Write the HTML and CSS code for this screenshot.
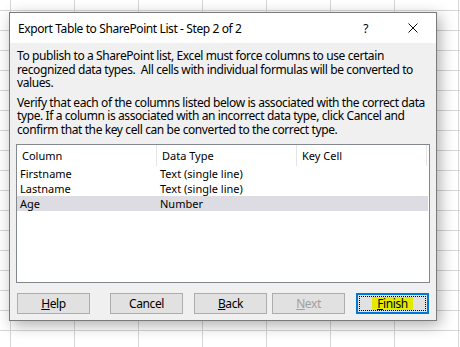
FILE: index.html
```html
<!DOCTYPE html>
<html lang="en">
<head>
  <meta charset="UTF-8" />
  <title>Export Table to SharePoint List</title>
  <link rel="stylesheet" href="styles.css">
</head>
<body>
  <div class="dialog">
    <div class="titlebar">
      <span class="title">Export Table to SharePoint List - Step 2 of 2</span>
      <span class="help-q">?</span>
      <svg class="close-x" width="10" height="10" viewBox="0 0 10 10">
        <path d="M0.5 0.5 L9.5 9.5 M9.5 0.5 L0.5 9.5" stroke="#111" stroke-width="1" fill="none" />
      </svg>
    </div>
    <div class="content">
      <p class="msg">To publish to a SharePoint list, Excel must force columns to use certain recognized data types.&nbsp; All cells with individual formulas will be converted to values.</p>
      <p class="msg">Verify that each of the columns listed below is associated with the correct data type. If a column is associated with an incorrect data type, click Cancel and confirm that the key cell can be converted to the correct type.</p>
      <div class="listview">
        <div class="lv-head">
          <div class="col c1">Column</div>
          <div class="col c2">Data Type</div>
          <div class="col c3">Key Cell</div>
        </div>
        <div class="lv-row">
          <div class="cell c1">Firstname</div>
          <div class="cell c2">Text (single line)</div>
          <div class="cell c3"></div>
        </div>
        <div class="lv-row">
          <div class="cell c1">Lastname</div>
          <div class="cell c2">Text (single line)</div>
          <div class="cell c3"></div>
        </div>
        <div class="lv-row selected">
          <div class="cell c1">Age</div>
          <div class="cell c2">Number</div>
          <div class="cell c3"></div>
        </div>
      </div>
      <div class="buttons">
        <button class="btn b-help"><u>H</u>elp</button>
        <button class="btn b-cancel">Cancel</button>
        <button class="btn b-back"><u>B</u>ack</button>
        <button class="btn b-next" disabled><u>N</u>ext</button>
        <button class="btn b-finish"><span class="focus"><span class="mark"><u>F</u>inish</span></span></button>
      </div>
    </div>
  </div>
</body>
</html>
```
FILE: styles.css
```css
html, body {
  margin: 0; padding: 0; height: 100%; overflow: hidden;
  font-family: 'Noto Sans', sans-serif; font-size: 12px; color: #000;
}
body {
  background-color: #fff;
  background-image:
    linear-gradient(to right, #d6d6d6 1px, transparent 1px),
    linear-gradient(to bottom, #d6d6d6 1px, transparent 1px);
  background-size: 64px 20px;
  background-position: 10px 10px;
  padding-top: 12px; box-sizing: border-box;
}
.dialog {
  margin-left: 9px; width: 426px; height: 307px;
  border: 1px solid #7a7a7a; background: #f0f0f0;
  box-shadow: 3px 4px 14px rgba(0,0,0,0.32);
  display: flex; flex-direction: column;
}
.titlebar {
  height: 30px; background: #fff; display: flex; align-items: center;
  padding-left: 8px; letter-spacing: -0.4px;
}
.title { flex: 1; }
.help-q { margin-right: 40px; }
.close-x { margin-right: 18px; }
.content {
  flex: 1; padding: 6px 6px 0 6px; letter-spacing: -0.4px;
}
.msg {
  margin: 0 0 6px 1px; line-height: 13.5px;
}
.listview {
  height: 137px; border: 1px solid #828790; background: #fff;
  margin-top: 8px; font-size: 11px; letter-spacing: 0;
}
.lv-head, .lv-row { display: flex; }
.lv-head { height: 21px; align-items: center; }
.col { height: 21px; line-height: 21px; padding-left: 5px; box-sizing: border-box; border-right: 1px solid #e5e5e5; }
.c1 { width: 140px; }
.c2 { width: 140px; }
.c3 { width: 130px; }
.lv-row { height: 15px; line-height: 15px; }
.cell { padding-left: 3px; box-sizing: border-box; }
.lv-row.selected { background: #dcdce2; width: 411px; }
.buttons { display: flex; margin-top: 10px; margin-left: 1px; }
.btn {
  width: 73px; height: 21px; padding: 0; box-sizing: border-box;
  background: #e1e1e1; border: 1px solid #adadad; border-radius: 0;
  font-family: 'Noto Sans', sans-serif; font-size: 12px; letter-spacing: -0.4px; color: #000;
  display: flex; align-items: center; justify-content: center;
}
.b-cancel { margin-left: 20px; }
.b-back { margin-left: 11px; }
.b-next { margin-left: 5px; color: #a0a0a0; }
.b-finish { margin-left: 11px; border: 2px solid #0078d7; padding: 1px; }
.focus {
  flex: 1; align-self: stretch; border: 1px dotted #000;
  display: flex; align-items: center; justify-content: center;
}
.mark { background: #e2ea00; padding: 0 5px; line-height: 13px; }
```
